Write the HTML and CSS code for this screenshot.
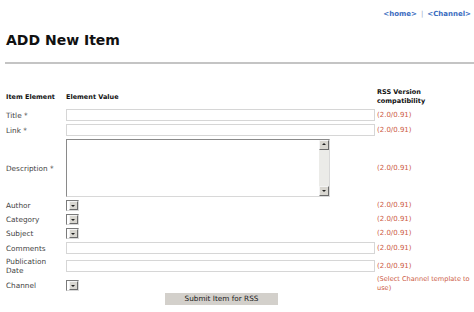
FILE: index.html
```html
<!DOCTYPE html>
<html>
<head>
<meta charset="utf-8">
<link rel="stylesheet" href="styles.css">
</head>
<body>
<div class="page">
  <nav class="nav"><a href="#">&lt;home&gt;</a><span class="sep">|</span><a href="#">&lt;Channel&gt;</a></nav>
  <h1 class="title">ADD New Item</h1>
  <hr class="rule">
  <form class="form">
    <div class="th">Item Element</div>
    <div class="th">Element Value</div>
    <div class="th">RSS Version<br>compatibility</div>

    <div class="lbl">Title *</div>
    <div class="val"><span class="text"></span></div>
    <div class="note">(2.0/0.91)</div>

    <div class="lbl">Link *</div>
    <div class="val"><span class="text"></span></div>
    <div class="note">(2.0/0.91)</div>

    <div class="lbl">Description *</div>
    <div class="val"><span class="area"><span class="sb"><span class="sbtn up"></span><span class="sbtn dn"></span></span></span></div>
    <div class="note">(2.0/0.91)</div>

    <div class="lbl">Author</div>
    <div class="val"><span class="sel"><span class="arr"></span></span></div>
    <div class="note">(2.0/0.91)</div>

    <div class="lbl">Category</div>
    <div class="val"><span class="sel"><span class="arr"></span></span></div>
    <div class="note">(2.0/0.91)</div>

    <div class="lbl">Subject</div>
    <div class="val"><span class="sel"><span class="arr"></span></span></div>
    <div class="note">(2.0/0.91)</div>

    <div class="lbl">Comments</div>
    <div class="val"><span class="text"></span></div>
    <div class="note">(2.0/0.91)</div>

    <div class="lbl">Publication<br>Date</div>
    <div class="val"><span class="text"></span></div>
    <div class="note">(2.0/0.91)</div>

    <div class="lbl">Channel</div>
    <div class="val"><span class="sel"><span class="arr"></span></span></div>
    <div class="note long">(Select Channel template to<br>use)</div>

    <div></div>
    <div class="btnrow"><span class="btn">Submit Item for RSS</span></div>
    <div></div>
  </form>
</div>
</body>
</html>
```
FILE: styles.css
```css
html, body {
  margin: 0;
  padding: 0;
  background: #fff;
}
.page {
  font-family: "DejaVu Sans", Verdana, sans-serif;
  font-size: 7px;
  color: #444;
  padding-top: 9px;
}
.nav {
  display: flex;
  justify-content: flex-end;
  align-items: center;
  gap: 4px;
  padding-right: 3px;
  height: 10px;
  line-height: 10px;
  font-size: 7px;
  font-weight: bold;
}
.nav a {
  color: #3a6cc0;
  text-decoration: none;
}
.nav .sep {
  color: #9aa8c8;
  font-weight: normal;
}
.title {
  margin: 13px 0 0 6px;
  font-size: 14px;
  line-height: 16px;
  font-weight: bold;
  color: #111;
}
.rule {
  margin: 14px 0 0 5px;
  border: 0;
  height: 2px;
  background: #c4c4c4;
}
.form {
  display: grid;
  grid-template-columns: 60px 311px 97px;
  row-gap: 3px;
  align-items: center;
  margin: 24px 0 0 6px;
}
.th {
  font-weight: bold;
  font-size: 6.5px;
  color: #111;
  line-height: 9px;
}
.lbl {
  line-height: 9px;
  font-size: 7.3px;
  color: #444;
}
.note {
  color: #cc5a44;
  line-height: 9px;
  white-space: nowrap;
}
.note.long {
  font-size: 6.6px;
  margin-top: -3px;
}
.val {
  display: flex;
  align-items: center;
}
.text {
  display: block;
  width: 307px;
  height: 10px;
  border: 1px solid #d6d6d6;
  background: #fff;
}
.area {
  display: flex;
  justify-content: flex-end;
  width: 262px;
  height: 56px;
  border: 1px solid;
  border-color: #8a8a8a #d8d8d8 #d8d8d8 #8a8a8a;
  background: #fff;
}
.sb {
  display: flex;
  flex-direction: column;
  justify-content: space-between;
  width: 10px;
  background: #ebebe8;
}
.sbtn {
  position: relative;
  display: block;
  width: 8px;
  height: 8px;
  border: 1px solid;
  border-color: #f4f4f4 #6a6a6a #6a6a6a #f4f4f4;
  background: #d8d6d0;
}
.sbtn::after {
  content: "";
  position: absolute;
  left: 2px;
  width: 0;
  height: 0;
  border-left: 2px solid transparent;
  border-right: 2px solid transparent;
}
.sbtn.up::after {
  top: 2px;
  border-bottom: 2px solid #222;
}
.sbtn.dn::after {
  top: 3px;
  border-top: 2px solid #222;
}
.sel {
  display: flex;
  justify-content: flex-end;
  align-items: center;
  width: 11px;
  height: 9px;
  border: 1px solid;
  border-color: #7a7a7a #d8d8d8 #d8d8d8 #7a7a7a;
  background: #fff;
}
.arr {
  position: relative;
  display: block;
  width: 7px;
  height: 7px;
  border: 1px solid;
  border-color: #f4f4f4 #6a6a6a #6a6a6a #f4f4f4;
  background: #d8d6d0;
}
.arr::after {
  content: "";
  position: absolute;
  left: 1px;
  top: 3px;
  width: 0;
  height: 0;
  border-left: 2px solid transparent;
  border-right: 2px solid transparent;
  border-top: 2px solid #222;
}
.btnrow {
  display: flex;
  justify-content: center;
  margin-top: -3px;
}
.btn {
  display: block;
  width: 113px;
  height: 12px;
  line-height: 12px;
  text-align: center;
  background: #d3d0cb;
  color: #222;
  font-size: 7.3px;
}
```
